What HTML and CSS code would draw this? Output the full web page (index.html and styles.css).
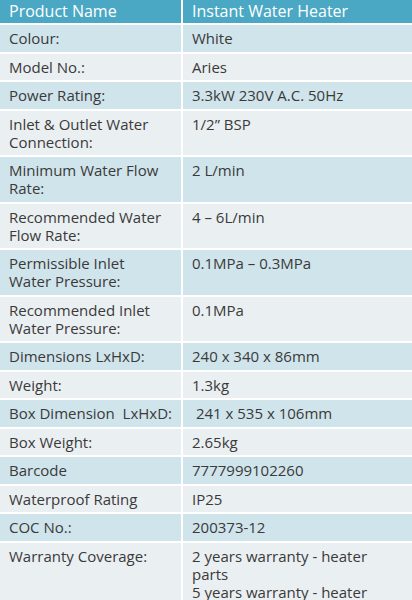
FILE: index.html
```html
<!DOCTYPE html>
<html>
<head>
<meta charset="utf-8">
<link rel="stylesheet" href="styles.css">
</head>
<body>
<div class="spec">
  <div class="cell label head">Product Name</div>
  <div class="cell head">Instant Water Heater</div>

  <div class="cell label blue">Colour:</div>
  <div class="cell blue">White</div>

  <div class="cell label grey">Model No.:</div>
  <div class="cell grey">Aries</div>

  <div class="cell label blue">Power Rating:</div>
  <div class="cell blue">3.3kW 230V A.C. 50Hz</div>

  <div class="cell label grey">Inlet &amp; Outlet Water Connection:</div>
  <div class="cell grey">1/2” BSP</div>

  <div class="cell label blue">Minimum Water Flow Rate:</div>
  <div class="cell blue">2 L/min</div>

  <div class="cell label grey">Recommended Water Flow Rate:</div>
  <div class="cell grey">4 – 6L/min</div>

  <div class="cell label blue">Permissible Inlet Water Pressure:</div>
  <div class="cell blue">0.1MPa – 0.3MPa</div>

  <div class="cell label grey">Recommended Inlet Water Pressure:</div>
  <div class="cell grey">0.1MPa</div>

  <div class="cell label blue">Dimensions LxHxD:</div>
  <div class="cell blue">240 x 340 x 86mm</div>

  <div class="cell label grey">Weight:</div>
  <div class="cell grey">1.3kg</div>

  <div class="cell label blue nowrap">Box Dimension &nbsp;LxHxD:</div>
  <div class="cell blue">&nbsp;241 x 535 x 106mm</div>

  <div class="cell label grey">Box Weight:</div>
  <div class="cell grey">2.65kg</div>

  <div class="cell label blue">Barcode</div>
  <div class="cell blue">7777999102260</div>

  <div class="cell label grey">Waterproof Rating</div>
  <div class="cell grey">IP25</div>

  <div class="cell label blue">COC No.:</div>
  <div class="cell blue">200373-12</div>

  <div class="cell label grey">Warranty Coverage:</div>
  <div class="cell grey">2 years warranty - heater parts<br>5 years warranty - heater element</div>
</div>
</body>
</html>
```

FILE: styles.css
```css
html, body {
  margin: 0;
  padding: 0;
  background: #ffffff;
}

body {
  font-family: "Open Sans", "Liberation Sans", sans-serif;
  color: #3a3a3a;
  font-size: 15px;
  line-height: 18px;
}

.spec {
  display: grid;
  grid-template-columns: 181px 1fr;
  gap: 2px 2px;
}

.cell {
  padding: 4px 9px 4.5px 9px;
}

.label {
  padding-right: 14px;
}

.nowrap {
  white-space: nowrap;
}

.head {
  background: #4ba8c4;
  color: #ffffff;
  font-size: 16px;
  padding-top: 2px;
  padding-bottom: 3px;
}

.blue {
  background: #d0e4eb;
}

.grey {
  background: #eaeff2;
}
```
